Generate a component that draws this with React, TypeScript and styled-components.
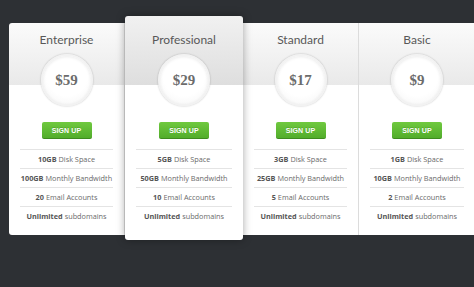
import React from "react";
import styled, { createGlobalStyle } from "styled-components";

const GlobalStyle = createGlobalStyle`
  html, body {
    margin: 0;
    padding: 0;
    background: #2d3034;
    overflow: hidden;
  }
`;

const Page = styled.div`
  width: 474px;
  height: 287px;
  background: #2d3034;
  display: flex;
  align-items: flex-start;
  padding: 16px 0 0 9px;
  box-sizing: border-box;
  overflow: hidden;
`;

const Card = styled.div<{ $featured?: boolean; $first?: boolean; $last?: boolean }>`
  position: relative;
  flex: 0 0 auto;
  width: ${({ $featured }) => ($featured ? "118px" : "116px")};
  margin-top: ${({ $featured }) => ($featured ? "0" : "7px")};
  padding: ${({ $featured }) => ($featured ? "7px 0 15px" : "0 0 10px")};
  box-sizing: border-box;
  background: ${({ $featured }) =>
    $featured
      ? "linear-gradient(to bottom, #f1f1f1 0, #dedede 69px, #fff 69px)"
      : "linear-gradient(to bottom, #fbfbfb 0, #e9e9e9 62px, #fff 62px)"};
  border-right: ${({ $featured, $last }) =>
    $featured || $last ? "none" : "1px solid #dcdcdc"};
  border-radius: ${({ $featured, $first }) =>
    $featured ? "3px" : $first ? "3px 0 0 3px" : "0"};
  box-shadow: ${({ $featured }) =>
    $featured ? "0 0 9px rgba(0, 0, 0, 0.35)" : "none"};
  z-index: ${({ $featured }) => ($featured ? 2 : 1)};
  display: flex;
  flex-direction: column;
  align-items: center;
`;

const Title = styled.div`
  margin-top: 9px;
  height: 16px;
  line-height: 16px;
  font-family: Lato, "Open Sans", sans-serif;
  font-size: 12px;
  color: #585858;
`;

const PriceCircle = styled.div`
  margin-top: 6px;
  width: 52px;
  height: 52px;
  border-radius: 50%;
  box-sizing: border-box;
  border: 2px solid #f2f2f2;
  background: radial-gradient(circle at 50% 40%, #ffffff 55%, #f3f3f3 100%);
  box-shadow: 0 0 2px rgba(0, 0, 0, 0.28), inset 0 1px 3px rgba(0, 0, 0, 0.08);
  display: flex;
  align-items: center;
  justify-content: center;
  font-family: "Liberation Serif", "DejaVu Serif", serif;
  font-weight: bold;
  font-size: 15px;
  color: #6c6c6c;
`;

const SignUp = styled.div`
  margin-top: 16px;
  width: 50px;
  height: 17px;
  box-sizing: border-box;
  border-radius: 2px;
  background: linear-gradient(to bottom, #70c93f 0%, #52ad2b 100%);
  border-bottom: 1px solid #3e8c1e;
  display: flex;
  align-items: center;
  justify-content: center;
  font-family: "Liberation Sans", Arial, sans-serif;
  font-weight: bold;
  font-size: 7px;
  letter-spacing: 0.1px;
  color: #fff;
  text-shadow: 0 -1px 0 rgba(0, 0, 0, 0.15);
`;

const Features = styled.ul`
  list-style: none;
  margin: 10px 0 0;
  padding: 0 11px;
  width: 100%;
  box-sizing: border-box;
`;

const Feature = styled.li`
  height: 19px;
  box-sizing: border-box;
  border-top: 1px solid #e4e4e4;
  display: flex;
  align-items: center;
  justify-content: center;
  font-family: "Open Sans", Lato, sans-serif;
  font-size: 7.3px;
  color: #6a6a6a;
  white-space: nowrap;

  b {
    font-weight: bold;
    color: #555;
    margin-right: 2px;
  }
`;

type Plan = {
  name: string;
  price: string;
  featured?: boolean;
  rows: [string, string][];
};

const plans: Plan[] = [
  {
    name: "Enterprise",
    price: "$59",
    rows: [
      ["10GB", "Disk Space"],
      ["100GB", "Monthly Bandwidth"],
      ["20", "Email Accounts"],
      ["Unlimited", "subdomains"],
    ],
  },
  {
    name: "Professional",
    price: "$29",
    featured: true,
    rows: [
      ["5GB", "Disk Space"],
      ["50GB", "Monthly Bandwidth"],
      ["10", "Email Accounts"],
      ["Unlimited", "subdomains"],
    ],
  },
  {
    name: "Standard",
    price: "$17",
    rows: [
      ["3GB", "Disk Space"],
      ["25GB", "Monthly Bandwidth"],
      ["5", "Email Accounts"],
      ["Unlimited", "subdomains"],
    ],
  },
  {
    name: "Basic",
    price: "$9",
    rows: [
      ["1GB", "Disk Space"],
      ["10GB", "Monthly Bandwidth"],
      ["2", "Email Accounts"],
      ["Unlimited", "subdomains"],
    ],
  },
];

export default function App() {
  return (
    <>
      <GlobalStyle />
      <Page>
        {plans.map((plan, i) => (
          <Card
            key={plan.name}
            $featured={plan.featured}
            $first={i === 0}
            $last={i === plans.length - 1}
          >
            <Title>{plan.name}</Title>
            <PriceCircle>{plan.price}</PriceCircle>
            <SignUp>SIGN UP</SignUp>
            <Features>
              {plan.rows.map(([strong, rest]) => (
                <Feature key={rest}>
                  <b>{strong}</b>
                  {rest}
                </Feature>
              ))}
            </Features>
          </Card>
        ))}
      </Page>
    </>
  );
}
